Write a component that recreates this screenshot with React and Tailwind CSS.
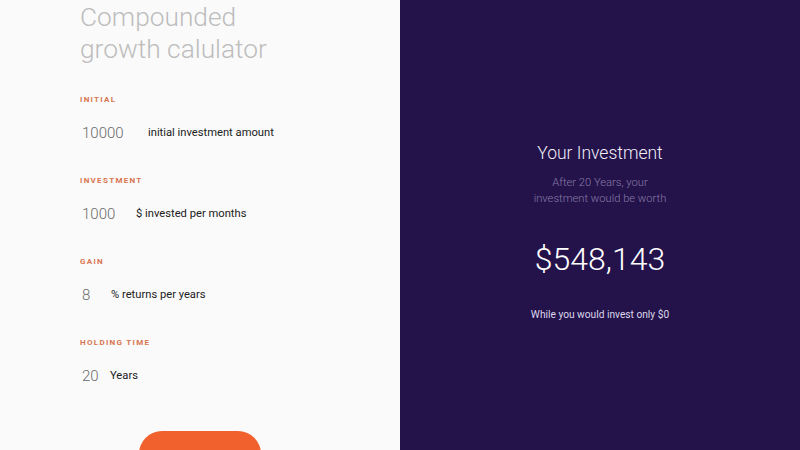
import React from "react";

const rows = [
  { label: "INITIAL", value: "10000", desc: "initial investment amount", w: "w-[68px]" },
  { label: "INVESTMENT", value: "1000", desc: "$ invested per months", w: "w-[56px]" },
  { label: "GAIN", value: "8", desc: "% returns per years", w: "w-[31px]" },
  { label: "HOLDING TIME", value: "20", desc: "Years", w: "w-[30px]" },
];

export default function App() {
  return (
    <div className="flex h-[450px] w-[800px] overflow-hidden" style={{ fontFamily: "Roboto, 'Noto Sans', sans-serif" }}>
      <div className="w-[400px] h-full bg-[#fafafa] pl-[80px]">
        <h1 className="mt-[1px] text-[26.3px] leading-[32px] font-light text-[#bdbdbd]">
          Compounded
          <br />
          growth calulator
        </h1>
        <div className="mt-[29px] flex flex-col">
          {rows.map((r, i) => (
            <div key={r.label} className={i === 0 ? "" : "mt-[32px]"}>
              <div className="text-[8px] leading-[12px] font-bold tracking-[1.3px] text-[#d8744f]">{r.label}</div>
              <div className="mt-[17px] flex items-center h-[20px]">
                <span className={`${r.w} pl-[2px] text-[15px] font-light text-[#6b6b6b]`}>{r.value}</span>
                <span className="text-[11.2px] text-[#212121]">{r.desc}</span>
              </div>
            </div>
          ))}
        </div>
        <div className="mt-[45px] ml-[59px] w-[122px] h-[46px] rounded-full bg-[#f0612e] flex justify-center pt-[14px] text-white text-[15px]">
          Calculate
        </div>
      </div>
      <div className="w-[400px] h-full bg-[#24124b] flex flex-col items-center pt-[141px] text-center">
        <div className="text-[17.5px] leading-[24px] font-light text-[#f1eef7]">Your Investment</div>
        <div className="mt-[10px] text-[11.2px] leading-[16px] font-light text-[#877ca6]">
          After 20 Years, your
          <br />
          investment would be worth
        </div>
        <div className="mt-[32px] text-[32px] leading-[40px] font-light text-white">$548,143</div>
        <div className="mt-[29px] text-[10.2px] leading-[14px] text-[#dcd7ea]">While you would invest only $0</div>
      </div>
    </div>
  );
}
